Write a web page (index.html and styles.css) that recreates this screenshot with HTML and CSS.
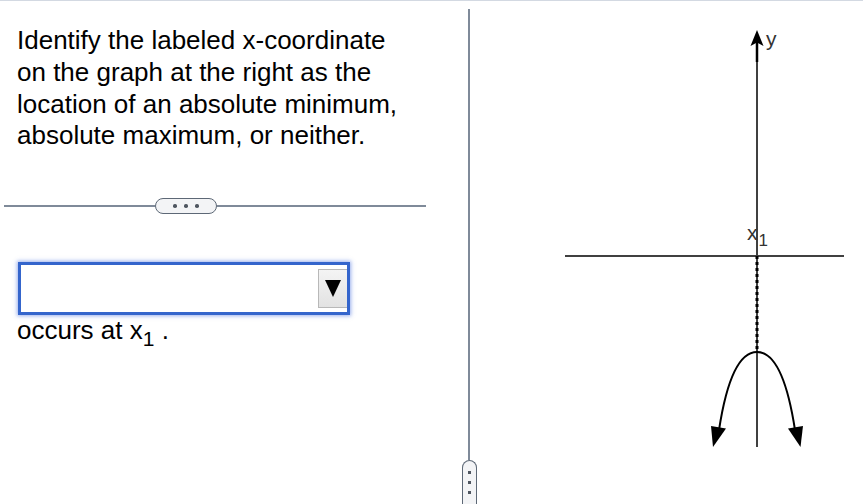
FILE: index.html
```html
<!DOCTYPE html>
<html>
<head>
<meta charset="utf-8">
<link rel="stylesheet" href="styles.css">
</head>
<body>
<div class="page">
  <div class="left">
    <p class="question">Identify the labeled x-coordinate on the graph at the right as the location of an absolute minimum, absolute maximum, or neither.</p>
    <div class="hdivider">
      <span class="hline hline-left"></span>
      <span class="hpill"><i></i><i></i><i></i></span>
      <span class="hline"></span>
    </div>
    <div class="select">
      <span class="select-btn"><span class="tri"></span></span>
    </div>
    <p class="answer">occurs at x<sub>1</sub> .</p>
  </div>
  <div class="vdivider">
    <span class="vline"></span>
    <span class="vpill"><i></i><i></i><i></i></span>
  </div>
  <div class="graph">
    <svg class="graph-svg" width="385" height="503" viewBox="478 1 385 503">
      <line x1="565" y1="256" x2="844" y2="256" stroke="#404040" stroke-width="2"/>
      <line x1="757" y1="60" x2="757" y2="447" stroke="#404040" stroke-width="2"/>
      <line x1="757" y1="42" x2="757" y2="62" stroke="#000" stroke-width="2.5"/>
      <path d="M757 30 L763.5 46 L757 42.5 L750.5 46 Z" fill="#000"/>
      <line x1="757" y1="256" x2="757" y2="352" stroke="#000" stroke-width="3" stroke-dasharray="3 3"/>
      <path d="M719 430 C727 378 740 352 757 352 C774 352 787 378 795 430" fill="none" stroke="#000" stroke-width="2"/>
      <path d="M713 447 L711 426 L726 428.5 Z" fill="#000"/>
      <path d="M800.5 447 L788 428.5 L803 426 Z" fill="#000"/>
      <text x="766" y="46" class="lbl">y</text>
      <text x="747" y="239.5" class="lbl">x</text>
      <text x="758.5" y="246" class="lbl-sub">1</text>
    </svg>
  </div>
</div>
</body>
</html>
```
FILE: styles.css
```css
html, body {
  margin: 0;
  padding: 0;
  background: #fff;
}
body {
  border-top: 1px solid #d3d9e2;
  font-family: "Liberation Sans", Arial, sans-serif;
  color: #000;
  overflow: hidden;
  height: 503px;
}
.page {
  display: flex;
  align-items: flex-start;
}
.left {
  margin-left: 4px;
  width: 422px;
}
.question {
  margin: 24px 14px 0 13px;
  font-size: 26px;
  line-height: 31.75px;
}
.hdivider {
  display: flex;
  align-items: center;
  height: 17px;
  margin-top: 45.5px;
}
.hline {
  flex: 1;
  height: 1.5px;
  background: #7f8a99;
}
.hline-left {
  flex: 0 0 151px;
}
.hpill {
  width: 60px;
  height: 14px;
  border: 1.5px solid #5d6876;
  border-radius: 9px;
  background: #f3f4f6;
  display: flex;
  align-items: center;
  justify-content: center;
  gap: 7.5px;
}
.hpill i, .vpill i {
  display: block;
  width: 3px;
  height: 3px;
  background: #4f5660;
}
.hpill i { border-radius: 50%; width: 3.5px; height: 3.5px; }
.select {
  margin: 47.5px 0 0 14px;
  width: 326px;
  height: 47px;
  border: 3px solid #3465cc;
  box-shadow: 0 0 4px 1px rgba(70, 110, 220, 0.55);
  background: #fff;
  display: flex;
  align-items: center;
  justify-content: flex-end;
}
.select-btn {
  width: 28px;
  height: 37px;
  border: 1px solid #b8b8b8;
  border-right: none;
  background: linear-gradient(#f4f4f4, #e2e2e2);
  display: flex;
  align-items: center;
  justify-content: center;
}
.tri {
  width: 0;
  height: 0;
  border-left: 8.5px solid transparent;
  border-right: 8.5px solid transparent;
  border-top: 17px solid #000;
}
.answer {
  margin: 0 0 0 13px;
  font-size: 26px;
  line-height: 31.75px;
}
.answer sub {
  font-size: 21px;
  vertical-align: -7px;
  line-height: 0;
}
.vdivider {
  margin-left: 34.5px;
  width: 17px;
  display: flex;
  flex-direction: column;
  align-items: center;
  padding-top: 8px;
}
.vline {
  width: 1.5px;
  height: 451px;
  background: #7f8a99;
}
.vpill {
  width: 15px;
  height: 60px;
  border: 1.5px solid #5d6876;
  border-bottom: none;
  border-radius: 8px 8px 0 0;
  background: #f3f4f6;
  display: flex;
  flex-direction: column;
  align-items: center;
  gap: 7px;
  padding-top: 10px;
  box-sizing: border-box;
}
.graph {
  flex: 1;
}
.graph-svg {
  display: block;
}
.lbl {
  font-family: "Liberation Sans", Arial, sans-serif;
  font-size: 21px;
  fill: #333;
}
.lbl-sub {
  font-family: "Liberation Sans", Arial, sans-serif;
  font-size: 17px;
  fill: #333;
}
```
